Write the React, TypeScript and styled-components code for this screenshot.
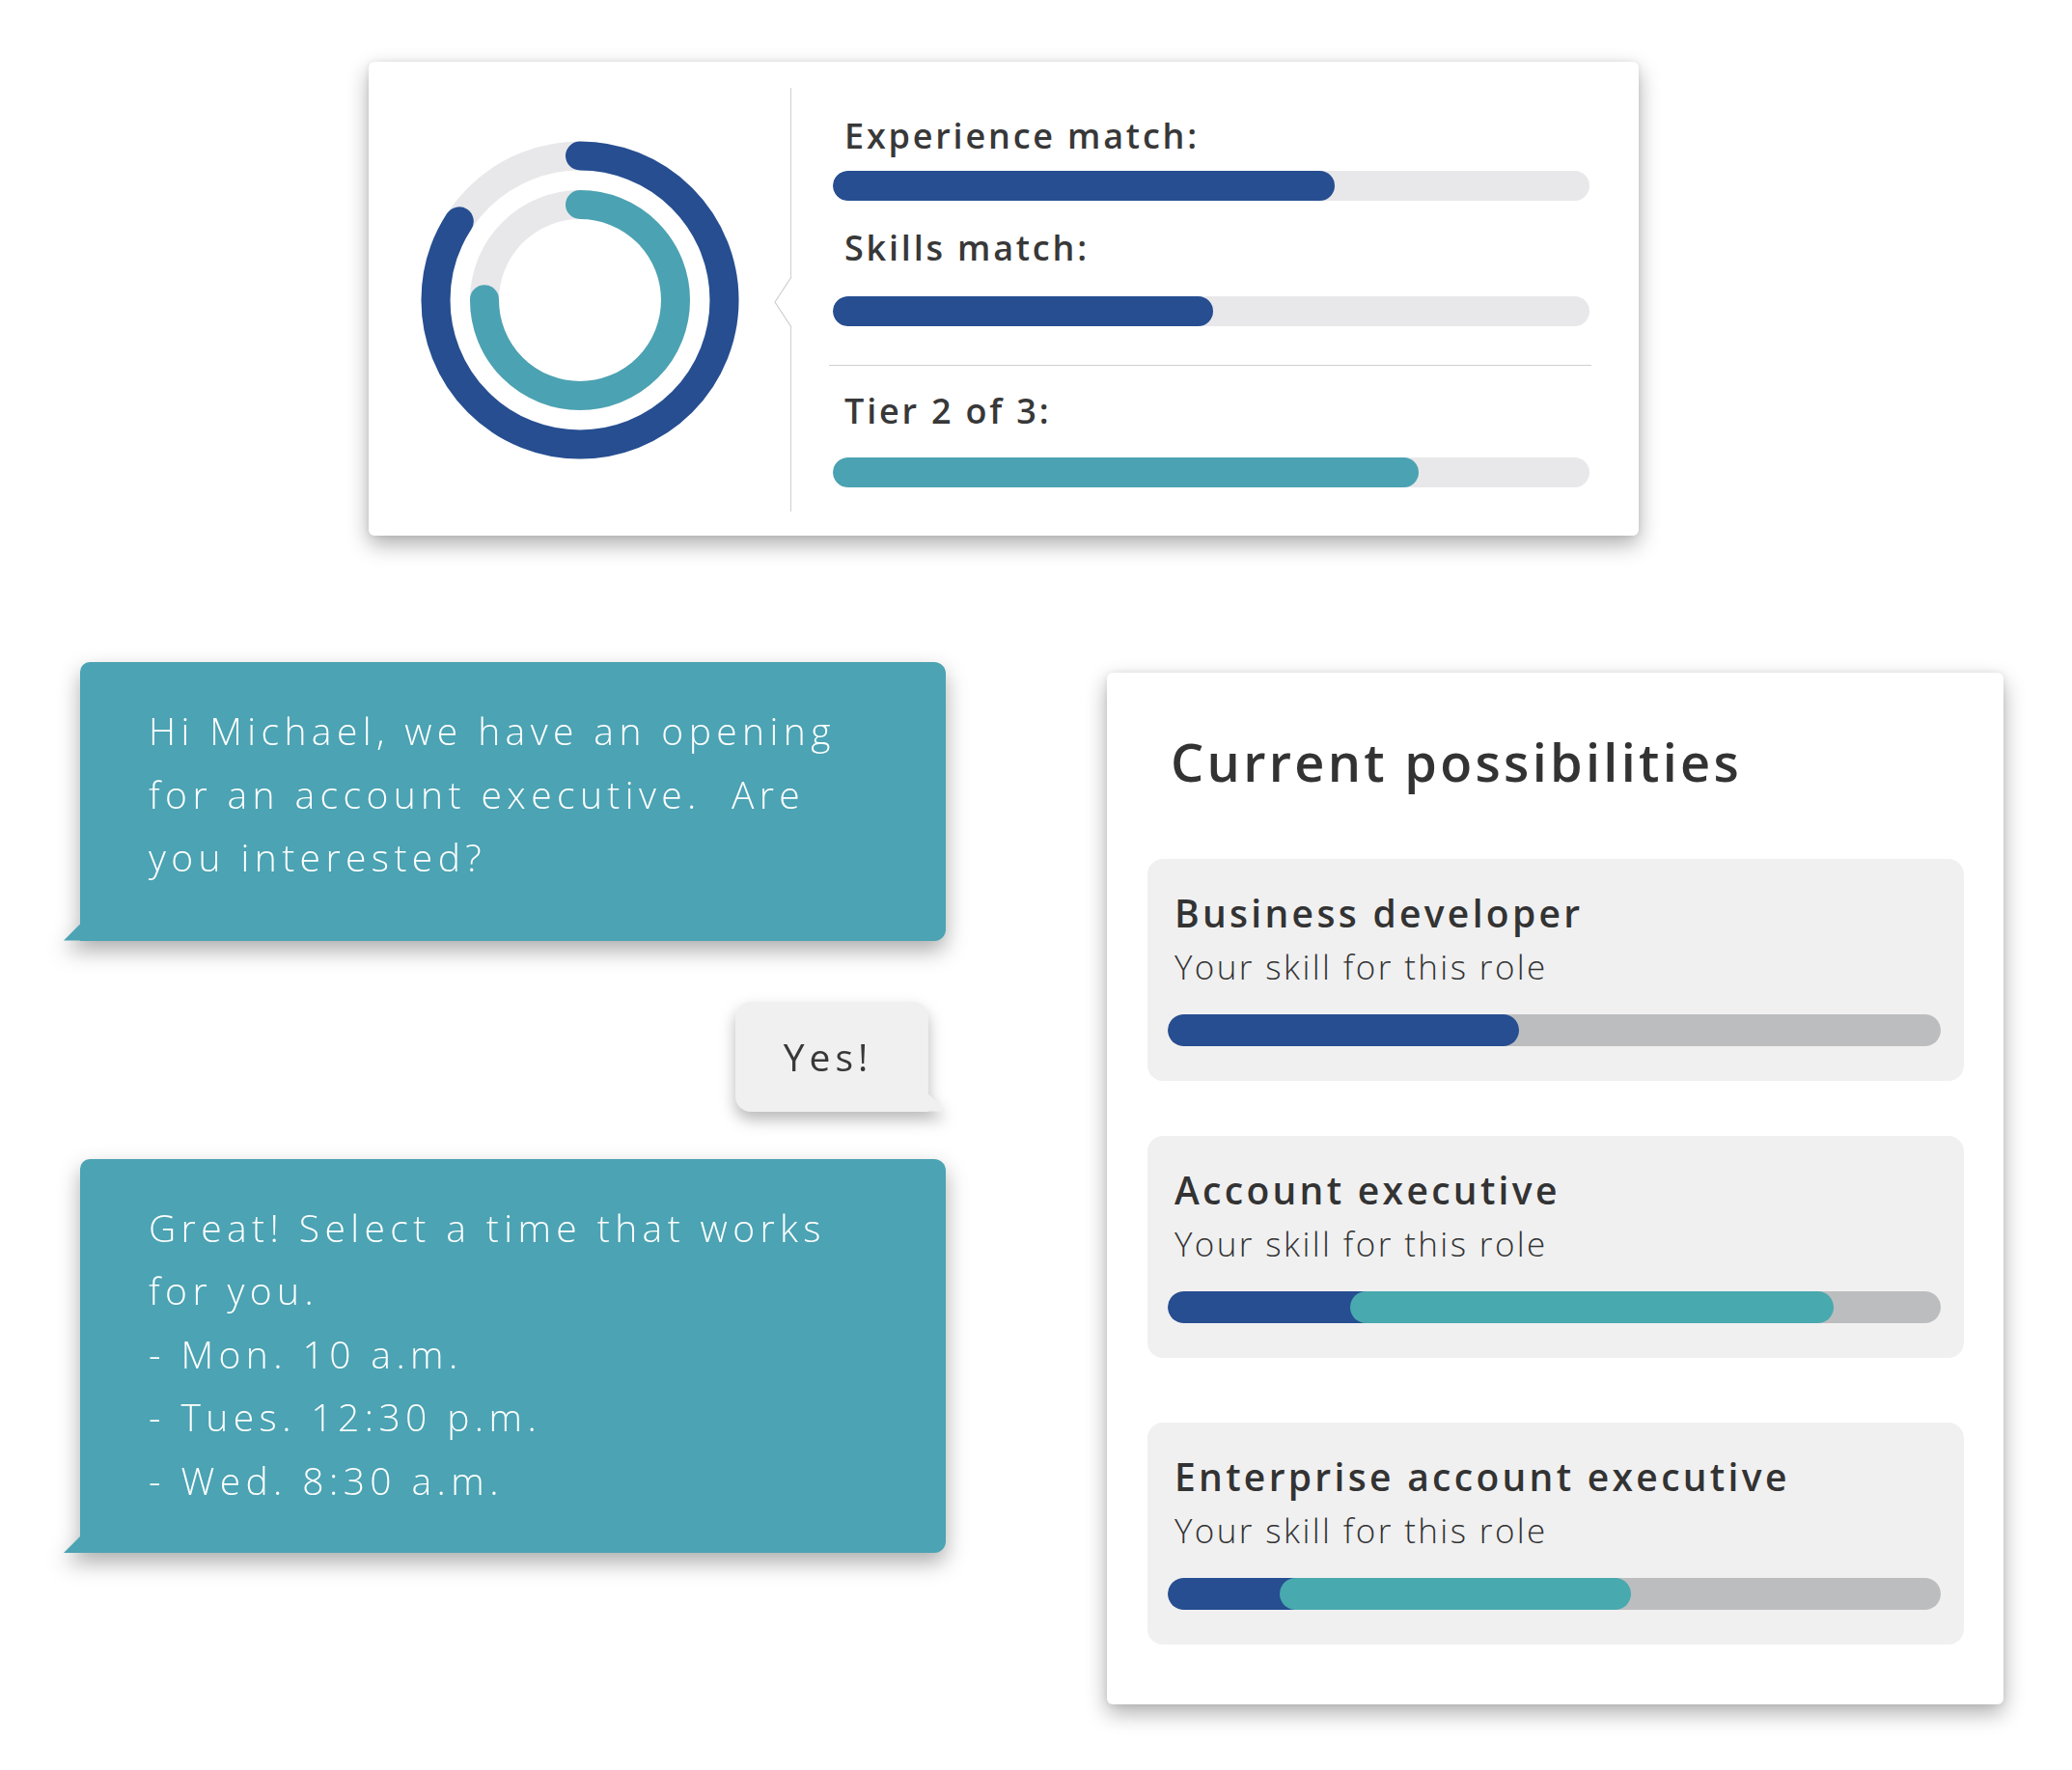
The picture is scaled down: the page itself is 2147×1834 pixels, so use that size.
import React from 'react';
import styled, { createGlobalStyle } from 'styled-components';

const NAVY = '#264e91';
const TEAL = '#4ba3b3';
const TEAL_BAR = '#48a9ae';
const INK = '#383838';

const GlobalStyle = createGlobalStyle`
  html, body {
    margin: 0;
    padding: 0;
    background: #fff;
  }
  body {
    font-family: 'Open Sans', 'Noto Sans', sans-serif;
    color: ${INK};
    -webkit-font-smoothing: antialiased;
  }
  * { box-sizing: border-box; }
`;

const Page = styled.div`
  width: 2147px;
  min-height: 1834px;
  padding-top: 64px;
`;

/** Match summary card */
const MatchCard = styled.section`
  display: flex;
  width: 1316px;
  height: 491px;
  margin-left: 382px;
  padding: 27px 51px 25px 0;
  background: #fff;
  border-radius: 6px;
  box-shadow: 0 9px 22px rgba(0, 0, 0, 0.32), 0 0 6px rgba(0, 0, 0, 0.08);
`;

const DonutColumn = styled.div`
  width: 437px;
  display: flex;
  align-items: center;
  justify-content: center;
`;

const Metrics = styled.div`
  position: relative;
  flex: 1;
  border-left: 1px solid #cfcfcf;
  padding: 30px 0 0 43px;
`;

const Notch = styled.svg`
  position: absolute;
  left: -18px;
  top: 196px;
`;

const MetricLabel = styled.div<{ $gap: number }>`
  margin-top: ${(p) => p.$gap}px;
  padding-left: 12px;
  font-size: 36px;
  line-height: 40px;
  font-weight: 600;
  letter-spacing: 2.8px;
  color: ${INK};
`;

const Track = styled.div<{ $gap: number }>`
  margin-top: ${(p) => p.$gap}px;
  height: 31px;
  border-radius: 16px;
  background: #e8e8ea;
  overflow: hidden;
`;

const Fill = styled.div<{ $color: string }>`
  height: 100%;
  border-radius: 16px;
  background: ${(p) => p.$color};
`;

const Rule = styled.hr`
  margin: 40px -2px 0 -4px;
  border: 0;
  border-top: 1px solid #cfcfcf;
`;

/** Bottom area */
const BottomRow = styled.div`
  display: flex;
  align-items: flex-start;
  margin-top: 131px;
`;

const ChatColumn = styled.div`
  display: flex;
  flex-direction: column;
  width: 897px;
  margin-left: 83px;
`;

const Bubble = styled.div<{ $padBottom: number; $gap?: number }>`
  position: relative;
  margin-top: ${(p) => p.$gap || 0}px;
  padding: 38px 20px ${(p) => p.$padBottom}px 71px;
  background: ${TEAL};
  color: #fff;
  font-size: 39px;
  line-height: 65.5px;
  font-weight: 300;
  letter-spacing: 5.4px;
  white-space: nowrap;
  border-radius: 10px 12px 12px 0;
  filter: drop-shadow(0 10px 11px rgba(0, 0, 0, 0.32));

  &::before {
    content: '';
    position: absolute;
    left: -17px;
    bottom: 0;
    width: 30px;
    height: 17px;
    background: ${TEAL};
    clip-path: polygon(17px 0, 0 100%, 100% 100%, 100% 0);
  }
`;

const Reply = styled.div`
  position: relative;
  align-self: flex-end;
  display: flex;
  align-items: center;
  justify-content: center;
  width: 200px;
  height: 114px;
  margin: 63px 18px 0 0;
  padding-right: 8px;
  background: #f0f0f0;
  border-radius: 16px 16px 0 16px;
  color: ${INK};
  font-size: 39px;
  font-weight: 400;
  letter-spacing: 5px;
  filter: drop-shadow(0 8px 8px rgba(0, 0, 0, 0.28));

  &::after {
    content: '';
    position: absolute;
    right: -18px;
    bottom: 0;
    width: 30px;
    height: 18px;
    background: #f0f0f0;
    clip-path: polygon(0 0, 12px 0, 100% 100%, 0 100%);
  }
`;

const PossibilitiesCard = styled.section`
  width: 929px;
  margin: 11px 0 0 167px;
  padding: 60px 41px 62px 42px;
  background: #fff;
  border-radius: 6px;
  box-shadow: 0 9px 22px rgba(0, 0, 0, 0.32), 0 0 6px rgba(0, 0, 0, 0.08);
`;

const Heading = styled.h2`
  margin: 0 0 69px 24px;
  font-size: 54px;
  line-height: 64px;
  font-weight: 600;
  letter-spacing: 3.3px;
  color: #333;
`;

const RoleItem = styled.div<{ $gap: number }>`
  margin-top: ${(p) => p.$gap}px;
  padding: 33px 24px 36px 21px;
  background: #f0f0f1;
  border-radius: 16px;
`;

const RoleTitle = styled.div`
  margin-left: 7px;
  font-size: 39px;
  line-height: 46px;
  font-weight: 600;
  letter-spacing: 3.3px;
  color: #333;
`;

const RoleHint = styled.div`
  margin: 12px 0 0 7px;
  font-size: 35px;
  line-height: 42px;
  font-weight: 300;
  letter-spacing: 2.4px;
  color: #333;
`;

const SkillTrack = styled.div`
  display: flex;
  margin-top: 28px;
  height: 33px;
  border-radius: 17px;
  background: #bcbdbf;
  overflow: hidden;
`;

const Segment = styled.div<{ $color: string }>`
  flex: none;
  height: 100%;
  border-radius: 17px;
  background: ${(p) => p.$color};
`;

type Seg = { color: string; start: number; end: number };

const roles: { title: string; gap: number; segs: Seg[] }[] = [
  { title: 'Business developer', gap: 0, segs: [{ color: NAVY, start: 0, end: 45.4 }] },
  {
    title: 'Account executive',
    gap: 57,
    segs: [
      { color: NAVY, start: 0, end: 28 },
      { color: TEAL_BAR, start: 23.6, end: 86.1 },
    ],
  },
  {
    title: 'Enterprise account executive',
    gap: 67,
    segs: [
      { color: NAVY, start: 0, end: 19 },
      { color: TEAL_BAR, start: 14.5, end: 59.9 },
    ],
  },
];

const metrics = [
  { label: 'Experience match:', value: 66.3, color: NAVY, labelGap: 0, barGap: 16 },
  { label: 'Skills match:', value: 50.3, color: NAVY, labelGap: 29, barGap: 30 },
  { label: 'Tier 2 of 3:', value: 77.4, color: '#4ba2b2', labelGap: 27, barGap: 28 },
];

const Donut = () => {
  const outerR = 149.5;
  const innerR = 99;
  const outerC = 2 * Math.PI * outerR;
  const innerC = 2 * Math.PI * innerR;
  return (
    <svg width="330" height="330" viewBox="0 0 330 330">
      <circle cx="165" cy="165" r={outerR} fill="none" stroke="#e8e8ea" strokeWidth="30" />
      <circle cx="165" cy="165" r={innerR} fill="none" stroke="#e8e8ea" strokeWidth="30" />
      <circle
        cx="165"
        cy="165"
        r={outerR}
        fill="none"
        stroke={NAVY}
        strokeWidth="30"
        strokeLinecap="round"
        strokeDasharray={`${(outerC * 303) / 360} ${outerC}`}
        transform="rotate(-90 165 165)"
      />
      <circle
        cx="165"
        cy="165"
        r={innerR}
        fill="none"
        stroke="#4ba2b2"
        strokeWidth="30"
        strokeLinecap="round"
        strokeDasharray={`${(innerC * 270) / 360} ${innerC}`}
        transform="rotate(-90 165 165)"
      />
    </svg>
  );
};

export default function App() {
  return (
    <Page>
      <GlobalStyle />
      <MatchCard>
        <DonutColumn>
          <Donut />
        </DonutColumn>
        <Metrics>
          <Notch width="19" height="52" viewBox="0 0 19 52">
            <polygon points="18,0 1,26 18,52 19,52 19,0" fill="#fff" />
            <polyline points="18,0 1,26 18,52" fill="none" stroke="#cfcfcf" strokeWidth="1.2" />
          </Notch>
          {metrics.map((m, i) => (
            <React.Fragment key={m.label}>
              {i === 2 && <Rule />}
              <MetricLabel $gap={m.labelGap}>{m.label}</MetricLabel>
              <Track $gap={m.barGap}>
                <Fill $color={m.color} style={{ width: `${m.value}%` }} />
              </Track>
            </React.Fragment>
          ))}
        </Metrics>
      </MatchCard>

      <BottomRow>
        <ChatColumn>
          <Bubble $padBottom={54}>
            Hi Michael, we have an opening
            <br />
            for an account executive.&nbsp; Are
            <br />
            you interested?
          </Bubble>
          <Reply>Yes!</Reply>
          <Bubble $padBottom={43} $gap={49}>
            Great! Select a time that works
            <br />
            for you.
            <br />
            - Mon. 10 a.m.
            <br />
            - Tues. 12:30 p.m.
            <br />
            - Wed. 8:30 a.m.
          </Bubble>
        </ChatColumn>

        <PossibilitiesCard>
          <Heading>Current possibilities</Heading>
          {roles.map((r) => (
            <RoleItem key={r.title} $gap={r.gap}>
              <RoleTitle>{r.title}</RoleTitle>
              <RoleHint>Your skill for this role</RoleHint>
              <SkillTrack>
                {r.segs.map((s, i) => {
                  const prevEnd = i === 0 ? 0 : r.segs[i - 1].end;
                  return (
                    <Segment
                      key={i}
                      $color={s.color}
                      style={{ width: `${s.end - s.start}%`, marginLeft: `${s.start - prevEnd}%` }}
                    />
                  );
                })}
              </SkillTrack>
            </RoleItem>
          ))}
        </PossibilitiesCard>
      </BottomRow>
    </Page>
  );
}
